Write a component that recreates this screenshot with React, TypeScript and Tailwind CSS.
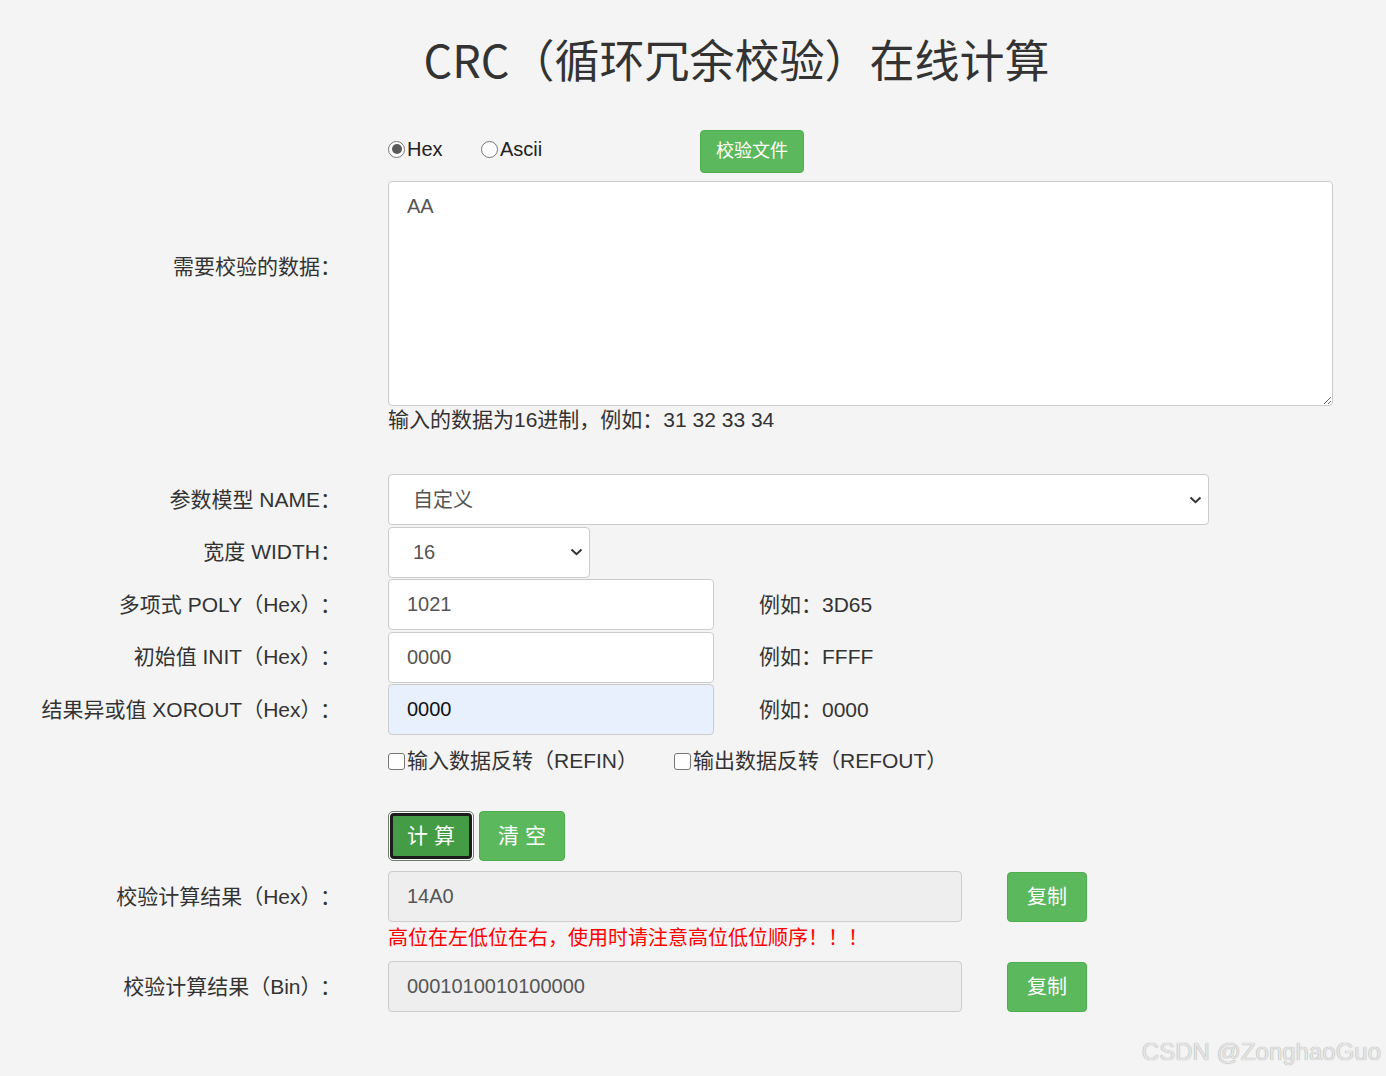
import React from "react";

const font = "font-['Liberation_Sans','Noto_Sans_CJK_SC',sans-serif]";

function Label({ children, className = "" }: { children: React.ReactNode; className?: string }) {
  return (
    <div className={`w-[388px] shrink-0 pr-[47px] text-right text-[21px] leading-[28px] text-[#333] ${className}`}>
      {children}
    </div>
  );
}

// "（Hex）：" has a wider gap before the colon in the original
function ParenLabel({ text }: { text: string }) {
  return (
    <Label>
      {text}
      <span className="ml-[9px]">：</span>
    </Label>
  );
}

function Chevron() {
  return (
    <svg width="13" height="8" viewBox="0 0 13 8" className="pointer-events-none absolute right-[7px] top-1/2 -translate-y-1/2">
      <path d="M1.5 1.5 L6.5 6.2 L11.5 1.5" fill="none" stroke="#333" strokeWidth="2" />
    </svg>
  );
}

function Radio({ checked }: { checked?: boolean }) {
  return (
    <span className="flex h-[17px] w-[17px] items-center justify-center rounded-full border border-[#767676] bg-white">
      {checked && <span className="h-[10px] w-[10px] rounded-full bg-[#5a5a5a]" />}
    </span>
  );
}

function Check() {
  return <span className="inline-block h-[17px] w-[17px] rounded-[3px] border border-[#767676] bg-white" />;
}

export default function App() {
  return (
    <main className={`relative min-h-screen bg-[#f4f4f4] ${font}`}>
      <h1 className="pl-[87px] pt-[35px] text-center font-['Noto_Sans_CJK_SC',sans-serif] text-[45px] leading-[48px] text-[#333]">
        CRC（循环冗余校验）在线计算
      </h1>

      {/* data input */}
      <div className="mt-[47px] flex">
        <Label className="pt-[123px]">需要校验的数据：</Label>
        <div>
          <div className="flex h-[43px] items-center text-[20px] text-[#222]">
            <label className="mb-[5px] flex w-[93px] items-center gap-[2px]">
              <Radio checked />
              Hex
            </label>
            <label className="mb-[5px] flex w-[219px] items-center gap-[2px]">
              <Radio />
              Ascii
            </label>
            <button className="h-[43px] w-[104px] rounded-[4px] border border-[#4cae4c] bg-[#5cb85c] text-[18px] text-white">
              校验文件
            </button>
          </div>
          <textarea
            defaultValue="AA"
            className="mt-[8px] block h-[225px] w-[945px] rounded-[4px] border border-[#ccc] bg-white px-[18px] pt-[10px] text-[20px] leading-[28px] text-[#555] outline-none"
          />
          <p className="text-[21px] leading-[28px] text-[#333]">输入的数据为16进制，例如：31 32 33 34</p>
        </div>
      </div>

      {/* parameters */}
      <div className="mt-[40px] flex flex-col gap-[1.5px]">
        <div className="flex h-[51px] items-center">
          <Label>参数模型 NAME：</Label>
          <div className="relative h-[51px] w-[821px]">
            <select className="h-full w-full appearance-none rounded-[4px] border border-[#ccc] bg-white pl-[24px] text-[20px] text-[#555] outline-none">
              <option>自定义</option>
            </select>
            <Chevron />
          </div>
        </div>
        <div className="flex h-[51px] items-center">
          <Label>宽度 WIDTH：</Label>
          <div className="relative h-[51px] w-[202px]">
            <select className="h-full w-full appearance-none rounded-[4px] border border-[#ccc] bg-white pl-[24px] text-[20px] text-[#555] outline-none">
              <option>16</option>
            </select>
            <Chevron />
          </div>
        </div>
        {[
          { label: "多项式 POLY（Hex）", value: "1021", eg: "3D65", auto: false },
          { label: "初始值 INIT（Hex）", value: "0000", eg: "FFFF", auto: false },
          { label: "结果异或值 XOROUT（Hex）", value: "0000", eg: "0000", auto: true },
        ].map((r) => (
          <div key={r.label} className="flex h-[51px] items-center">
            <ParenLabel text={r.label} />
            <input
              defaultValue={r.value}
              className={`h-[51px] w-[326px] rounded-[4px] border border-[#ccc] px-[18px] text-[20px] outline-none ${
                r.auto ? "bg-[#e8f0fe] text-[#111]" : "bg-white text-[#555]"
              }`}
            />
            <span className="ml-[45px] text-[21px] text-[#333]">例如：{r.eg}</span>
          </div>
        ))}
      </div>

      <div className="mt-[12px] flex h-[28px] items-center pl-[388px] text-[21px] text-[#333]">
        <label className="flex w-[286px] items-center gap-[2px]">
          <Check />
          输入数据反转（REFIN）
        </label>
        <label className="flex items-center gap-[2px]">
          <Check />
          输出数据反转（REFOUT）
        </label>
      </div>

      <div className="mt-[36px] flex gap-[5px] pl-[388px]">
        <div className="h-[50px] w-[86px] rounded-[5px] border border-[#6b7f6b] bg-[#fafafa] p-[1px]">
          <button className="h-full w-full rounded-[4px] border-[3px] border-[#1c1c1c] bg-[#449d44] text-[21px] text-white">
            计 算
          </button>
        </div>
        <button className="h-[50px] w-[86px] rounded-[4px] border border-[#4cae4c] bg-[#5cb85c] text-[21px] text-white">
          清 空
        </button>
      </div>

      {/* results */}
      <div className="mt-[10px] flex h-[51px] items-center">
        <ParenLabel text="校验计算结果（Hex）" />
        <input
          readOnly
          value="14A0"
          className="h-[51px] w-[574px] rounded-[4px] border border-[#ccc] bg-[#eee] px-[18px] text-[20px] text-[#555] outline-none"
        />
        <button className="ml-[45px] h-[50px] w-[80px] rounded-[4px] border border-[#4cae4c] bg-[#5cb85c] text-[20px] text-white">
          复制
        </button>
      </div>
      <p className="mt-[2px] pl-[388px] text-[20px] leading-[28px] text-[#f00]">
        高位在左低位在右，使用时请注意高位低位顺序！！！
      </p>
      <div className="mt-[9px] flex h-[51px] items-center">
        <ParenLabel text="校验计算结果（Bin）" />
        <input
          readOnly
          value="0001010010100000"
          className="h-[51px] w-[574px] rounded-[4px] border border-[#ccc] bg-[#eee] px-[18px] text-[20px] text-[#555] outline-none"
        />
        <button className="ml-[45px] h-[50px] w-[80px] rounded-[4px] border border-[#4cae4c] bg-[#5cb85c] text-[20px] text-white">
          复制
        </button>
      </div>

      <div className="absolute bottom-[6px] right-[5px] text-[24px] text-[#e6e6e6] [text-shadow:0_0_1px_#8a8a8a]">
        CSDN @ZonghaoGuo
      </div>
    </main>
  );
}
